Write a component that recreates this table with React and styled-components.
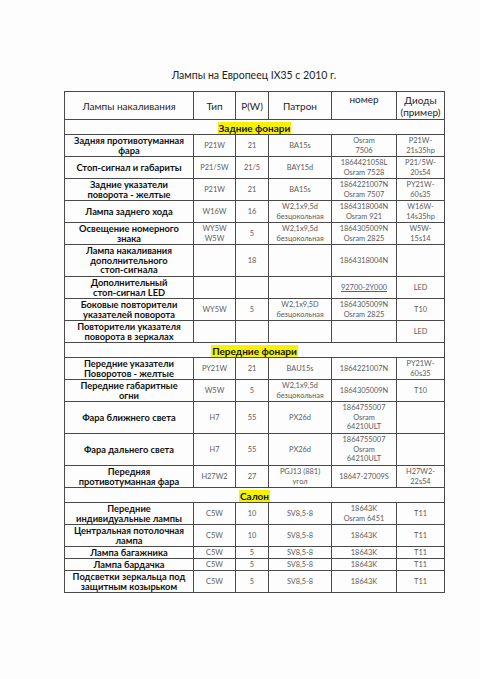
import React from 'react'
import styled, { createGlobalStyle } from 'styled-components'

const GlobalStyle = createGlobalStyle`
  html, body {
    margin: 0;
    padding: 0;
    background: #fdfdfd;
  }
  body {
    font-family: Lato, "Open Sans", sans-serif;
    color: #1d1d1d;
  }
`;

const rear = [
  { name: ['Задняя противотуманная', 'фара'], type: ['P21W'], w: ['21'], base: ['BA15s'], num: ['Osram', '7506'], led: ['P21W-', '21s35hp'], h: 22 },
  { name: ['Стоп-сигнал и габариты'], type: ['P21/5W'], w: ['21/5'], base: ['BAY15d'], num: ['1864421058L', 'Osram 7528'], led: ['P21/5W-', '20s54'], h: 22 },
  { name: ['Задние указатели', 'поворота - желтые'], type: ['P21W'], w: ['21'], base: ['BA15s'], num: ['1864221007N', 'Osram 7507'], led: ['PY21W-', '60s35'], h: 22 },
  { name: ['Лампа заднего хода'], type: ['W16W'], w: ['16'], base: ['W2,1x9,5d', 'безцокольная'], num: ['1864318004N', 'Osram 921'], led: ['W16W-', '14s35hp'], h: 22 },
  { name: ['Освещение номерного', 'знака'], type: ['WY5W', 'W5W'], w: ['5'], base: ['W2,1x9,5d', 'безцокольная'], num: ['1864305009N', 'Osram 2825'], led: ['W5W-', '15s14'], h: 22 },
  { name: ['Лампа накаливания', 'дополнительного', 'стоп-сигнала'], type: [], w: ['18'], base: [], num: ['1864318004N'], led: [], h: 32 },
  { name: ['Дополнительный', 'стоп-сигнал LED'], type: [], w: [], base: [], num: ['92700-2Y000'], link: true, led: ['LED'], h: 22 },
  { name: ['Боковые повторители', 'указателей поворота'], type: ['WY5W'], w: ['5'], base: ['W2,1x9,5D', 'безцокольная'], num: ['1864305009N', 'Osram 2825'], led: ['T10'], h: 22 },
  { name: ['Повторители указателя', 'поворота в зеркалах'], type: [], w: [], base: [], num: [], led: ['LED'], h: 22 },
];

const front = [
  { name: ['Передние указатели', 'Поворотов - желтые'], type: ['PY21W'], w: ['21'], base: ['BAU15s'], num: ['1864221007N'], led: ['PY21W-', '60s35'], h: 22 },
  { name: ['Передние габаритные', 'огни'], type: ['W5W'], w: ['5'], base: ['W2,1x9,5d', 'безцокольная'], num: ['1864305009N'], led: ['T10'], h: 22 },
  { name: ['Фара ближнего света'], type: ['H7'], w: ['55'], base: ['PX26d'], num: ['1864755007', 'Osram', '64210ULT'], led: [], h: 32 },
  { name: ['Фара дальнего света'], type: ['H7'], w: ['55'], base: ['PX26d'], num: ['1864755007', 'Osram', '64210ULT'], led: [], h: 32 },
  { name: ['Передняя', 'противотуманная фара'], type: ['H27W2'], w: ['27'], base: ['PGJ13 (881)', 'угол'], num: ['18647-27009S'], led: ['H27W2-', '22s54'], h: 22 },
];

const salon = [
  { name: ['Передние', 'индивидуальные лампы'], type: ['C5W'], w: ['10'], base: ['SV8,5-8'], num: ['18643K', 'Osram 6451'], led: ['T11'], h: 22 },
  { name: ['Центральная потолочная', 'лампа'], type: ['C5W'], w: ['10'], base: ['SV8,5-8'], num: ['18643K'], led: ['T11'], h: 22 },
  { name: ['Лампа багажника'], type: ['C5W'], w: ['5'], base: ['SV8,5-8'], num: ['18643K'], led: ['T11'], h: 12 },
  { name: ['Лампа бардачка'], type: ['C5W'], w: ['5'], base: ['SV8,5-8'], num: ['18643K'], led: ['T11'], h: 12 },
  { name: ['Подсветки зеркальца под', 'защитным козырьком'], type: ['C5W'], w: ['5'], base: ['SV8,5-8'], num: ['18643K'], led: ['T11'], h: 22 },
];

const Lines = ({ items }) =>
  items.map((t, i) => (
    <React.Fragment key={i}>
      {i > 0 && <br />}
      {t}
    </React.Fragment>
  ));

function LampRow({ row }) {
  return (
    <Row $h={row.h}>
      <NameCell><Lines items={row.name} /></NameCell>
      <DataCell><Lines items={row.type} /></DataCell>
      <DataCell><Lines items={row.w} /></DataCell>
      <DataCell><Lines items={row.base} /></DataCell>
      <DataCell>
        {row.link ? <Link>{row.num[0]}</Link> : <Lines items={row.num} />}
      </DataCell>
      <DataCell><Lines items={row.led} /></DataCell>
    </Row>
  );
}

function Section({ title }) {
  return (
    <Row $h={14}>
      <SectionCell colSpan={6}>
        <Marker>{title}</Marker>
      </SectionCell>
    </Row>
  );
}

export default function App() {
  return (
    <Page>
      <GlobalStyle />
      <Title>Лампы на Европеец IX35 с 2010 г.</Title>
      <Table>
        <colgroup>
          <col style={{ width: 129 }} />
          <col style={{ width: 42 }} />
          <col style={{ width: 33 }} />
          <col style={{ width: 63 }} />
          <col style={{ width: 65 }} />
          <col style={{ width: 48 }} />
        </colgroup>
        <tbody>
          <Row $h={28}>
            <HeadCell>Лампы накаливания</HeadCell>
            <HeadCell>Тип</HeadCell>
            <HeadCell>P(W)</HeadCell>
            <HeadCell>Патрон</HeadCell>
            <HeadCell $top>номер</HeadCell>
            <HeadCell>Диоды<br />(пример)</HeadCell>
          </Row>
          <Section title="Задние фонари" />
          {rear.map((r, i) => <LampRow key={i} row={r} />)}
          <Section title="Передние фонари" />
          {front.map((r, i) => <LampRow key={i} row={r} />)}
          <Section title="Салон" />
          {salon.map((r, i) => <LampRow key={i} row={r} />)}
        </tbody>
      </Table>
    </Page>
  );
}

const Page = styled.div`
  width: 480px;
  height: 679px;
  box-sizing: border-box;
  padding: 68px 0 0 64px;
  background: #fdfdfd;
`;

const Title = styled.div`
  width: 380px;
  text-align: center;
  font-size: 10.5px;
  line-height: 14px;
  color: #1e1e1e;
  margin-bottom: 9px;
`;

const Table = styled.table`
  width: 380px;
  border-collapse: collapse;
  table-layout: fixed;
`;

const Row = styled.tr`
  height: ${p => p.$h}px;
`;

const Cell = styled.td`
  border: 1px solid #4a4a4a;
  padding: 0 1px;
  text-align: center;
  vertical-align: middle;
  white-space: nowrap;
  overflow: hidden;
`;

const HeadCell = styled(Cell)`
  font-size: 10px;
  line-height: 12px;
  color: #262626;
  vertical-align: ${p => (p.$top ? 'top' : 'middle')};
  padding-top: ${p => (p.$top ? '1px' : '0')};
`;

const NameCell = styled(Cell)`
  font-size: 9.3px;
  font-weight: 700;
  line-height: 9.8px;
  color: #111;
`;

const DataCell = styled(Cell)`
  font-size: 7.4px;
  line-height: 9.5px;
  color: #5c5c5c;
`;

const SectionCell = styled(Cell)`
  line-height: 12px;
`;

const Marker = styled.span`
  background: #f6f200;
  font-size: 10px;
  font-weight: 700;
  color: #141414;
  padding: 0 1px;
`;

const Link = styled.span`
  color: #5a5a7a;
  text-decoration: underline;
`;
